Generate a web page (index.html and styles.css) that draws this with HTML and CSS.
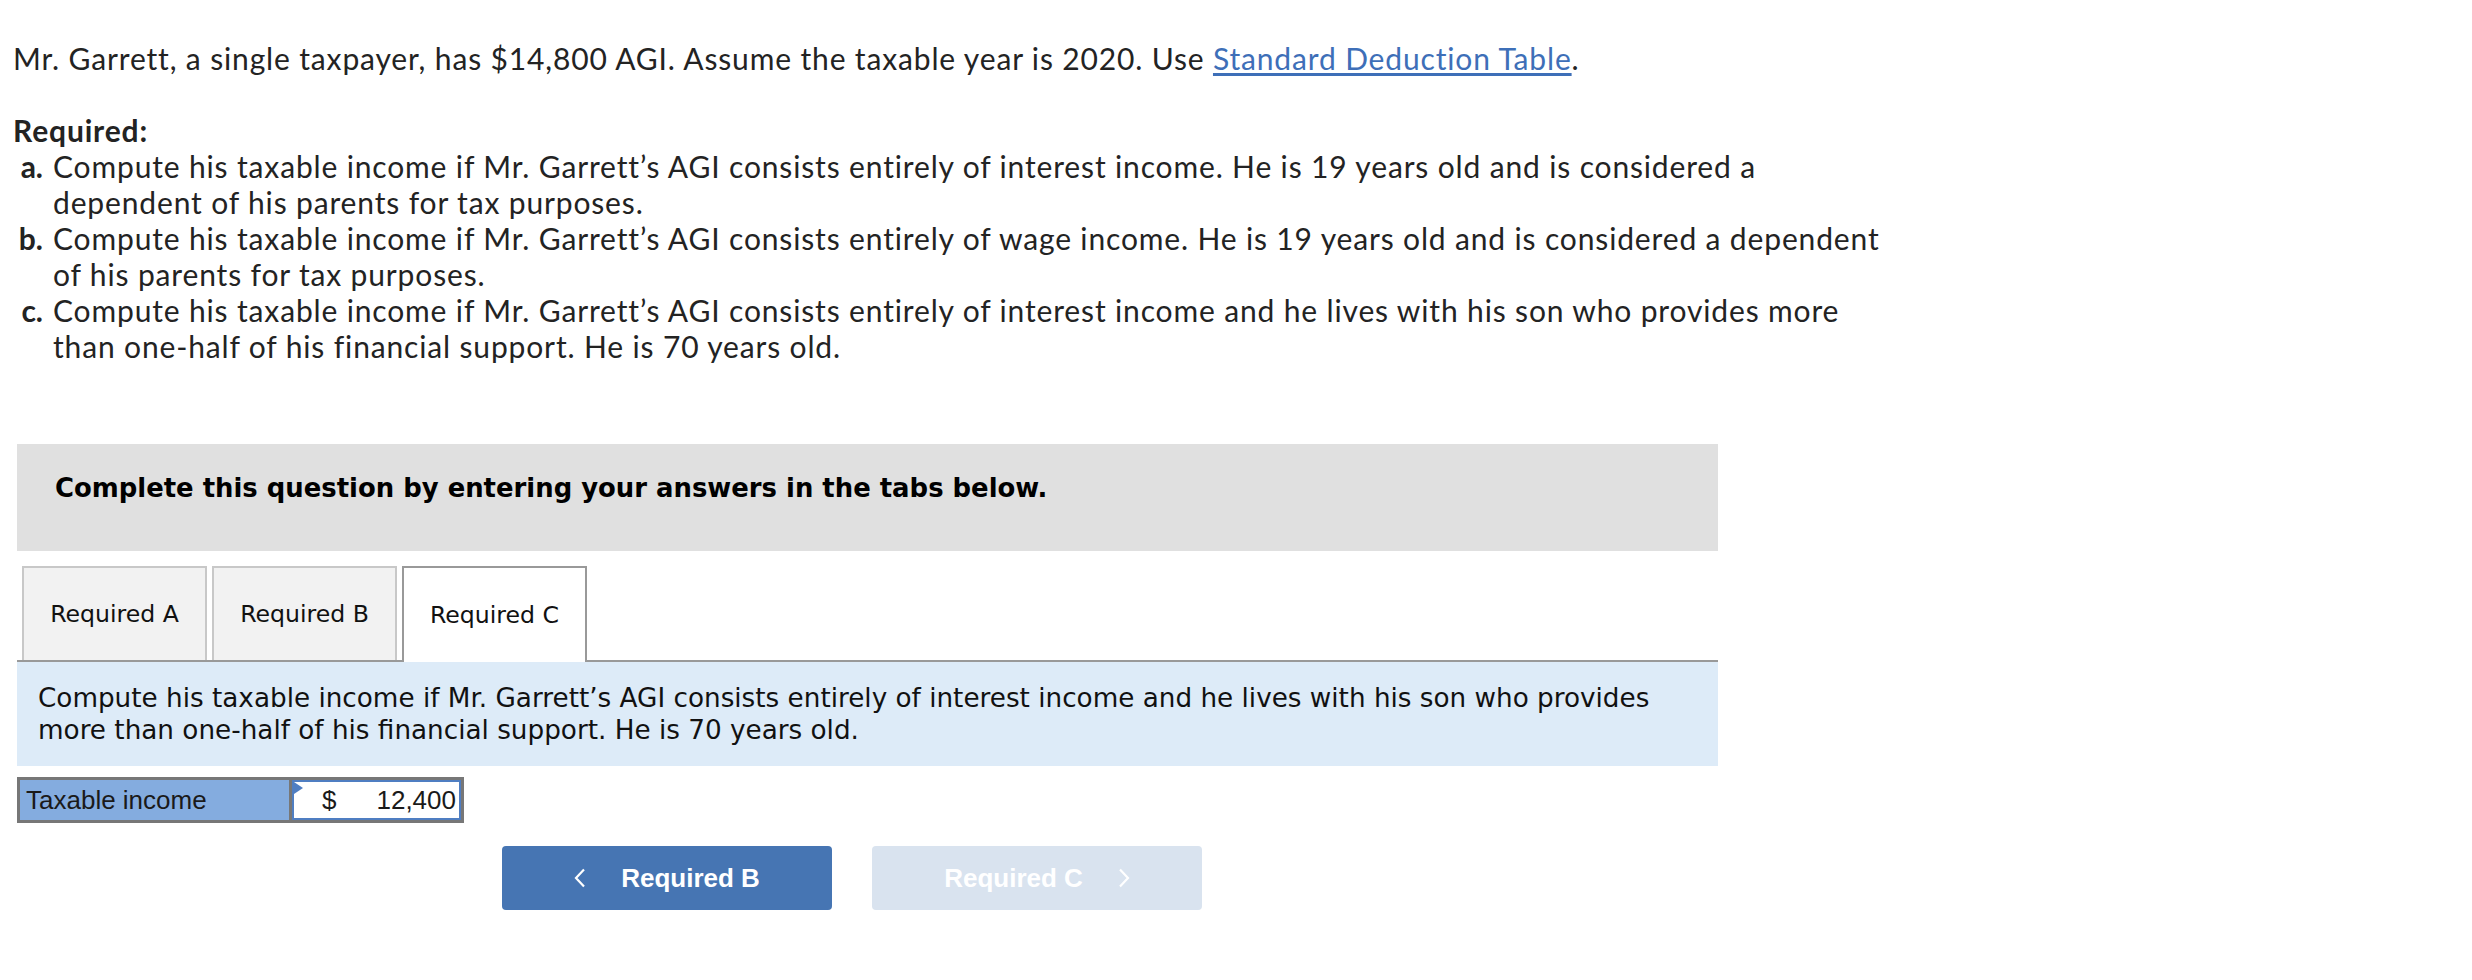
FILE: index.html
```html
<!DOCTYPE html>
<html>
<head>
<meta charset="utf-8">
<link rel="stylesheet" href="styles.css">
</head>
<body>
<div class="page">
  <div class="problem">
    <p class="intro">Mr. Garrett, a single taxpayer, has $14,800 AGI. Assume the taxable year is 2020. Use <a href="#" class="link">Standard Deduction Table</a>.</p>
    <div class="req-title">Required:</div>
    <div class="item"><span class="lbl">a.</span><span class="txt">Compute his taxable income if Mr. Garrett’s AGI consists entirely of interest income. He is 19 years old and is considered a dependent of his parents for tax purposes.</span></div>
    <div class="item"><span class="lbl">b.</span><span class="txt">Compute his taxable income if Mr. Garrett’s AGI consists entirely of wage income. He is 19 years old and is considered a dependent of his parents for tax purposes.</span></div>
    <div class="item"><span class="lbl">c.</span><span class="txt">Compute his taxable income if Mr. Garrett’s AGI consists entirely of interest income and he lives with his son who provides more than one-half of his financial support. He is 70 years old.</span></div>
  </div>

  <div class="question">
    <div class="banner">Complete this question by entering your answers in the tabs below.</div>
    <div class="tabs">
      <div class="tab">Required A</div>
      <div class="tab">Required B</div>
      <div class="tab active">Required C</div>
    </div>
    <div class="panel">Compute his taxable income if Mr. Garrett’s AGI consists entirely of interest income and he lives with his son who provides more than one-half of his financial support. He is 70 years old.</div>
    <table class="answer">
      <tr>
        <td class="label-cell">Taxable income</td>
        <td class="input-cell"><div class="input-box"><span class="cur">$</span><span class="val">12,400</span></div></td>
      </tr>
    </table>
    <div class="nav">
      <button class="nav-btn prev">
        <svg class="chev" width="12" height="20" viewBox="0 0 12 20"><polyline points="10,1.5 2,10 10,18.5" fill="none" stroke="#fff" stroke-width="2.2"/></svg>
        <span>Required B</span>
      </button>
      <button class="nav-btn next" disabled>
        <span>Required C</span>
        <svg class="chev" width="12" height="20" viewBox="0 0 12 20"><polyline points="2,1.5 10,10 2,18.5" fill="none" stroke="#fff" stroke-width="2.2"/></svg>
      </button>
    </div>
  </div>
</div>
</body>
</html>
```

FILE: styles.css
```css
html, body {
  margin: 0;
  padding: 0;
  background: #ffffff;
}

.page {
  padding: 40px 0 0 13px;
}

.problem {
  width: 1877px;
  font-family: Lato, "Open Sans", sans-serif;
  font-size: 30px;
  letter-spacing: 0.85px;
  line-height: 36px;
  color: #232323;
}

.intro {
  margin: 0 0 36px 0;
}

.link {
  color: #3e6fb8;
  text-decoration: underline;
  text-underline-offset: 3px;
}

.req-title {
  font-weight: 700;
}

.item {
  display: flex;
}

.lbl {
  flex: 0 0 30px;
  text-align: right;
  font-weight: 700;
  margin-right: 10px;
  letter-spacing: 0;
}

.txt {
  flex: 1 1 auto;
}

.question {
  margin: 80px 0 0 4px;
  width: 1701px;
}

.banner {
  background: #e0e0e0;
  height: 107px;
  box-sizing: border-box;
  padding: 29px 0 0 38px;
  font-family: "DejaVu Sans", Verdana, sans-serif;
  font-weight: 700;
  font-size: 25.9px;
  line-height: 30px;
  color: #000;
}

.tabs {
  display: flex;
  margin-top: 15px;
  padding-left: 5px;
  border-bottom: 2px solid #999999;
}

.tab {
  width: 185px;
  height: 94px;
  box-sizing: border-box;
  margin-right: 5px;
  background: #f2f2f2;
  border: 2px solid #c8c8c8;
  border-bottom: none;
  display: flex;
  align-items: center;
  justify-content: center;
  font-family: "DejaVu Sans", Verdana, sans-serif;
  font-size: 23.6px;
  color: #111;
}

.tab.active {
  background: #ffffff;
  border-color: #999999;
  height: 96px;
  margin-bottom: -2px;
}

.panel {
  background: #ddebf8;
  box-sizing: border-box;
  height: 104px;
  padding: 20px 20px 0 21px;
  font-family: "DejaVu Sans", Verdana, sans-serif;
  font-size: 26.25px;
  line-height: 32px;
  color: #111;
}

.answer {
  margin-top: 11px;
  border-collapse: collapse;
  border: 3px solid #777777;
  font-family: "Liberation Sans", Arial, sans-serif;
  font-size: 26px;
  color: #1a1a1a;
}

.answer td {
  padding: 0;
  height: 40px;
}

.label-cell {
  width: 272px;
  background: #84acdf;
  padding-left: 6px !important;
  border-right: 3px solid #777777;
  box-sizing: border-box;
}

.input-cell {
  width: 169px;
  background: #ffffff;
}

.input-box {
  position: relative;
  height: 40px;
  box-sizing: border-box;
  border: 2px solid #4f7ec2;
  display: flex;
  align-items: center;
  justify-content: space-between;
  padding: 0 3px 0 28px;
}

.input-box::before {
  content: "";
  position: absolute;
  left: 0;
  top: 0;
  border-top: 6px solid transparent;
  border-bottom: 6px solid transparent;
  border-left: 9px solid #4f7ec2;
}

.nav {
  display: flex;
  gap: 40px;
  margin-top: 23px;
  padding-left: 485px;
}

.nav-btn {
  width: 330px;
  height: 64px;
  border: none;
  border-radius: 4px;
  display: flex;
  align-items: center;
  justify-content: center;
  gap: 35px;
  font-family: "Liberation Sans", Arial, sans-serif;
  font-weight: 700;
  font-size: 26px;
  color: #ffffff;
  padding: 0;
}

.nav-btn.prev {
  background: #4675b3;
}

.nav-btn.next {
  background: #d9e3ef;
}

.chev {
  display: block;
}
```
